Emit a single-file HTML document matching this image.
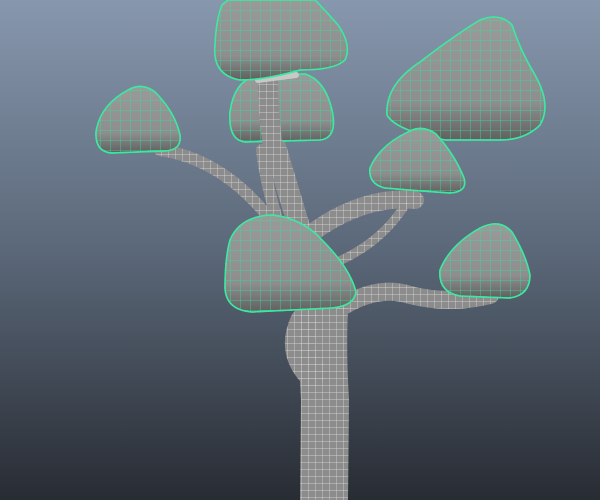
<!DOCTYPE html>
<html><head><style>html,body{margin:0;padding:0;width:600px;height:500px;overflow:hidden}</style></head>
<body>
<svg width="600" height="500" viewBox="0 0 600 500" xmlns="http://www.w3.org/2000/svg">
<defs>
<linearGradient id="bg" x1="0" y1="0" x2="0" y2="1">
<stop offset="0" stop-color="#8797ad"/><stop offset="0.5" stop-color="#5b6879"/><stop offset="1" stop-color="#282c33"/>
</linearGradient>
<linearGradient id="cap" x1="0" y1="0" x2="0" y2="1">
<stop offset="0" stop-color="#9a9a9a"/><stop offset="0.7" stop-color="#8e8e8e"/><stop offset="1" stop-color="#606060"/>
</linearGradient>
<pattern id="g" width="10" height="10" patternUnits="userSpaceOnUse">
<path d="M0 0H10M0 0V10" stroke="#35e09a" stroke-width="0.8" fill="none"/>
</pattern>
<pattern id="w" width="7" height="7" patternUnits="userSpaceOnUse">
<path d="M0 0H7M0 0V7" stroke="#e0e0e0" stroke-width="0.7" fill="none"/>
</pattern>
</defs>
<rect width="600" height="500" fill="url(#bg)"/>
<g fill="none" stroke-linecap="round" stroke="#8c8c8c">
<path d="M324 500 L325 400 Q322 350 324 310" stroke-width="48"/>
<path d="M312 372 Q292 350 305 322" stroke-width="30"/>
<path d="M322 300 Q312 260 300 230 Q285 180 270 130 L268 80" stroke-width="22"/>
<path d="M280 230 Q265 180 262 150" stroke-width="12"/>
<path d="M282 235 Q230 160 160 150" stroke-width="12"/>
<path d="M305 238 Q360 195 415 200" stroke-width="18"/>
<path d="M330 265 Q380 245 405 205" stroke-width="9"/>
<path d="M345 305 Q380 285 410 295 Q450 305 490 295" stroke-width="18"/>
</g>
<g fill="none" stroke-linecap="round" stroke="url(#w)">
<path d="M324 500 L325 400 Q322 350 324 310" stroke-width="48"/>
<path d="M312 372 Q292 350 305 322" stroke-width="30"/>
<path d="M322 300 Q312 260 300 230 Q285 180 270 130 L268 80" stroke-width="22"/>
<path d="M280 230 Q265 180 262 150" stroke-width="12"/>
<path d="M282 235 Q230 160 160 150" stroke-width="12"/>
<path d="M305 238 Q360 195 415 200" stroke-width="18"/>
<path d="M330 265 Q380 245 405 205" stroke-width="9"/>
<path d="M345 305 Q380 285 410 295 Q450 305 490 295" stroke-width="18"/>
</g>
<g stroke="#3de8a0" stroke-width="1.5">
<path d="M230 112 Q234 82 255 76 L305 74 Q325 80 332 110 Q338 138 320 140 L245 142 Q228 140 230 112Z" fill="url(#cap)"/>
<path d="M230 112 Q234 82 255 76 L305 74 Q325 80 332 110 Q338 138 320 140 L245 142 Q228 140 230 112Z" fill="url(#g)"/>
</g>
<path d="M275 160 Q268 120 268 82" fill="none" stroke="#8c8c8c" stroke-width="20" stroke-linecap="round"/>
<path d="M275 160 Q268 120 268 82" fill="none" stroke="url(#w)" stroke-width="20" stroke-linecap="round"/>
<path d="M258 80 L296 75" fill="none" stroke="#c8c8c8" stroke-width="6" stroke-linecap="round"/>
<g stroke="#3de8a0" stroke-width="1.5">
<path d="M222 5 L228 0 L315 0 Q325 10 338 25 Q352 45 345 60 Q335 70 300 70 Q265 80 240 80 Q212 75 215 45 Q216 20 222 5Z" fill="url(#cap)"/>
<path d="M222 5 L228 0 L315 0 Q325 10 338 25 Q352 45 345 60 Q335 70 300 70 Q265 80 240 80 Q212 75 215 45 Q216 20 222 5Z" fill="url(#g)"/>
<path d="M128 90 Q142 82 155 92 Q175 112 180 135 Q182 150 165 151 L112 153 Q95 152 96 132 Q100 105 128 90Z" fill="url(#cap)"/>
<path d="M128 90 Q142 82 155 92 Q175 112 180 135 Q182 150 165 151 L112 153 Q95 152 96 132 Q100 105 128 90Z" fill="url(#g)"/>
<path d="M480 20 Q500 12 512 25 Q520 50 535 75 Q552 105 540 125 Q525 140 500 140 L445 140 Q395 130 387 115 Q385 85 420 62 Q455 35 480 20Z" fill="url(#cap)"/>
<path d="M480 20 Q500 12 512 25 Q520 50 535 75 Q552 105 540 125 Q525 140 500 140 L445 140 Q395 130 387 115 Q385 85 420 62 Q455 35 480 20Z" fill="url(#g)"/>
<path d="M408 132 Q422 124 436 134 Q455 155 464 178 Q468 192 450 193 Q420 191 385 188 Q368 184 370 168 Q380 145 408 132Z" fill="url(#cap)"/>
<path d="M408 132 Q422 124 436 134 Q455 155 464 178 Q468 192 450 193 Q420 191 385 188 Q368 184 370 168 Q380 145 408 132Z" fill="url(#g)"/>
<path d="M230 240 Q240 216 272 215 Q302 218 322 240 Q350 268 356 292 Q354 306 332 308 L252 312 Q226 310 225 288 Q225 258 230 240Z" fill="url(#cap)"/>
<path d="M230 240 Q240 216 272 215 Q302 218 322 240 Q350 268 356 292 Q354 306 332 308 L252 312 Q226 310 225 288 Q225 258 230 240Z" fill="url(#g)"/>
<path d="M480 228 Q500 218 512 232 Q526 255 530 275 Q530 295 510 298 L460 296 Q438 292 440 270 Q450 245 480 228Z" fill="url(#cap)"/>
<path d="M480 228 Q500 218 512 232 Q526 255 530 275 Q530 295 510 298 L460 296 Q438 292 440 270 Q450 245 480 228Z" fill="url(#g)"/>
</g>
</svg>
</body></html>
